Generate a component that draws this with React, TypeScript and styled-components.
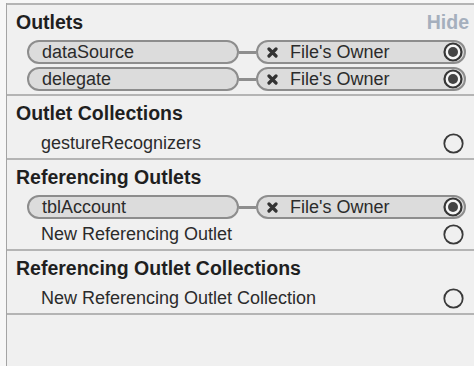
import React from 'react';
import styled, { createGlobalStyle } from 'styled-components';

const GlobalStyle = createGlobalStyle`
  html, body {
    margin: 0;
    padding: 0;
    background: #f7f7f7;
    font-family: "Liberation Sans", Arial, sans-serif;
  }
  * {
    box-sizing: border-box;
  }
`;

const Page = styled.div`
  height: 366px;
  padding: 3px 0 0 6px;
  overflow: hidden;
`;

const Panel = styled.div`
  height: 100%;
  background: #f0f0f0;
  border-left: 1px solid #a4a4a4;
`;

const Section = styled.section`
  border-top: 2px solid #b4b4b4;
  padding: 6px 0 2px 0;
`;

const Header = styled.div`
  display: flex;
  justify-content: space-between;
  align-items: center;
  height: 22px;
  padding: 0 5px 0 9px;
  margin-bottom: 5px;
`;

const Title = styled.h2`
  margin: 0;
  font-size: 19.5px;
  line-height: 22px;
  font-weight: 700;
  color: #1f1f1f;
`;

const HideLink = styled.span`
  font-size: 19.5px;
  line-height: 22px;
  font-weight: 700;
  color: #a5afbd;
`;

const ConnectionRow = styled.div`
  display: grid;
  grid-template-columns: 212px 17px 1fr;
  align-items: center;
  height: 27px;
  padding: 1px 8px 0 20px;
`;

const Pill = styled.div<{ $tight?: boolean }>`
  display: flex;
  align-items: center;
  height: 24px;
  border: 2px solid #8d8d8d;
  border-radius: 12px;
  background: #dcdcdc;
  padding: ${({ $tight }) => ($tight ? '0 1px 0 9px' : '0 8px 0 13px')};
  font-size: 18px;
  color: #2b2b2b;
  white-space: nowrap;
`;

const Connector = styled.div`
  height: 3px;
  background: #8e8e8e;
`;

const PillLabel = styled.span`
  flex: 1;
`;

const RemoveIcon = styled.svg`
  flex: none;
  margin-right: 12px;
`;

const PlainRow = styled.div`
  display: flex;
  align-items: center;
  justify-content: space-between;
  height: 27px;
  padding: 1px 10px 0 34px;
  font-size: 18px;
  color: #2b2b2b;
`;

const Radio = styled.svg`
  flex: none;
`;

const Cross = () => (
  <RemoveIcon width="11" height="11" viewBox="0 0 11 11">
    <path d="M2 2 L9 9 M9 2 L2 9" stroke="#333" strokeWidth="3.2" strokeLinecap="round" />
  </RemoveIcon>
);

const FilledRadio = () => (
  <Radio width="20" height="20" viewBox="0 0 20 20">
    <circle cx="10" cy="10" r="8.5" fill="#f6f6f6" stroke="#363636" strokeWidth="2.2" />
    <circle cx="10" cy="10" r="5" fill="#444" />
  </Radio>
);

const EmptyRadio = () => (
  <Radio width="21" height="21" viewBox="0 0 21 21">
    <circle cx="10.5" cy="10.5" r="9.2" fill="none" stroke="#3a3a3a" strokeWidth="1.8" />
  </Radio>
);

const Connection = ({ name, target }: { name: string; target: string }) => (
  <ConnectionRow>
    <Pill>
      <PillLabel>{name}</PillLabel>
    </Pill>
    <Connector />
    <Pill $tight>
      <Cross />
      <PillLabel>{target}</PillLabel>
      <FilledRadio />
    </Pill>
  </ConnectionRow>
);

const Empty = ({ label }: { label: string }) => (
  <PlainRow>
    <span>{label}</span>
    <EmptyRadio />
  </PlainRow>
);

export default function App() {
  return (
    <>
      <GlobalStyle />
      <Page>
        <Panel>
          <Section>
            <Header>
              <Title>Outlets</Title>
              <HideLink>Hide</HideLink>
            </Header>
            <Connection name="dataSource" target="File's Owner" />
            <Connection name="delegate" target="File's Owner" />
          </Section>
          <Section>
            <Header>
              <Title>Outlet Collections</Title>
            </Header>
            <Empty label="gestureRecognizers" />
          </Section>
          <Section>
            <Header>
              <Title>Referencing Outlets</Title>
            </Header>
            <Connection name="tblAccount" target="File's Owner" />
            <Empty label="New Referencing Outlet" />
          </Section>
          <Section>
            <Header>
              <Title>Referencing Outlet Collections</Title>
            </Header>
            <Empty label="New Referencing Outlet Collection" />
          </Section>
          <Section />
        </Panel>
      </Page>
    </>
  );
}
